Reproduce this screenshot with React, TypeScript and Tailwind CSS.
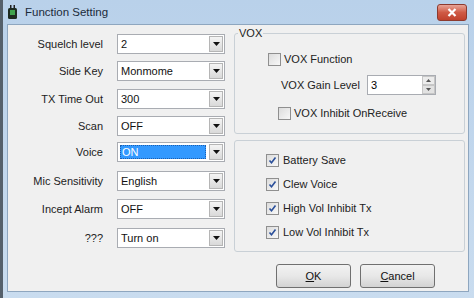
import React from "react";

const FONT = { fontFamily: '"Liberation Sans", Arial, sans-serif' };

const ROWS: { label: string; value: string; mt: string; selected?: boolean }[] = [
  { label: "Squelch level", value: "2", mt: "mt-0" },
  { label: "Side Key", value: "Monmome", mt: "mt-[7px]" },
  { label: "TX Time Out", value: "300", mt: "mt-[8px]" },
  { label: "Scan", value: "OFF", mt: "mt-[7px]" },
  { label: "Voice", value: "ON", mt: "mt-[6px]", selected: true },
  { label: "Mic Sensitivity", value: "English", mt: "mt-[9px]" },
  { label: "Incept Alarm", value: "OFF", mt: "mt-[8px]" },
  { label: "???", value: "Turn on", mt: "mt-[9px]" },
];

function Combo({ value, selected }: { value: string; selected?: boolean }) {
  return (
    <div className="flex h-[20px] w-[108px] items-stretch border border-[#a9acb2] bg-white">
      <div className="flex flex-1 items-center p-[2px]">
        {selected ? (
          <div className="flex h-full w-full items-center border border-dotted border-[#1d5fb0] bg-[#3399ff] pl-[1px] text-white">
            {value}
          </div>
        ) : (
          <span className="pl-[1px] text-[#111]">{value}</span>
        )}
      </div>
      <div className="m-[1px] flex w-[14px] items-center justify-center border border-[#b5b5b5] bg-gradient-to-b from-[#f4f4f4] to-[#d9d9d9]">
        <svg width="7" height="4" viewBox="0 0 7 4">
          <path d="M0 0h7L3.5 4z" fill="#111" />
        </svg>
      </div>
    </div>
  );
}

function Check({ checked }: { checked?: boolean }) {
  return (
    <div className="flex h-[13px] w-[13px] shrink-0 items-center justify-center border border-[#8f8f8f] bg-gradient-to-br from-[#dcdcdc] to-[#f8f8f8]">
      {checked && (
        <svg width="9" height="9" viewBox="0 0 9 9">
          <path d="M1.5 4.5l2 2.3L7.5 1.5" stroke="#2a4f9a" strokeWidth="1.6" fill="none" />
        </svg>
      )}
    </div>
  );
}

function Button({ children }: { children: React.ReactNode }) {
  return (
    <button className="flex h-[24px] w-[75px] items-center justify-center rounded-[3px] border border-[#707070] bg-gradient-to-b from-[#f2f2f2] via-[#e8e8e8] to-[#d3d3d3] text-[#111]">
      {children}
    </button>
  );
}

export default function App() {
  return (
    <div
      className="flex h-[298px] w-[474px] flex-col overflow-hidden border-l-[3px] border-[#55606b] bg-gradient-to-b from-[#b9d1ea] to-[#c9dcef] text-[11px] leading-[14px]"
      style={FONT}
    >
      {/* title bar */}
      <div className="flex h-[24px] shrink-0 items-center pl-[5px] pr-[7px]">
        <svg width="9" height="14" viewBox="0 0 9 14" className="mr-[8px]">
          <rect x="2" y="0" width="1.5" height="3" fill="#222" />
          <rect x="5.5" y="0" width="1.5" height="3" fill="#222" />
          <rect x="0" y="3" width="9" height="11" rx="1.5" fill="#1d2b20" />
          <rect x="2" y="5" width="5" height="5" fill="#3fa34d" />
        </svg>
        <span className="text-[11.5px] text-[#1b2a3a]">Function Setting</span>
        <div className="ml-auto flex h-[17px] w-[30px] items-center justify-center rounded-[3px] border border-[#8d3a2e] bg-gradient-to-b from-[#e7a396] via-[#cf5a45] to-[#c0412c]">
          <svg width="10" height="9" viewBox="0 0 10 9">
            <path d="M1.5 1l7 7M8.5 1l-7 7" stroke="#fff" strokeWidth="2.2" />
          </svg>
        </div>
      </div>

      {/* client */}
      <div className="ml-[4px] mr-[5px] flex h-[268px] shrink-0 border border-[#8ea6bf] bg-[#f0f0f0]">
        <div className="flex w-[226px] shrink-0 flex-col pt-[9px]">
          {ROWS.map((r) => (
            <div key={r.label} className={`flex items-center ${r.mt}`}>
              <div className="w-[96px] pr-[1px] text-right text-[#222]">{r.label}</div>
              <div className="ml-[13px]">
                <Combo value={r.value} selected={r.selected} />
              </div>
            </div>
          ))}
        </div>

        <div className="flex flex-1 flex-col pr-[3px] pt-[2px]">
          <fieldset className="h-[107px] rounded-[3px] border border-[#c9d0d6] px-0">
            <legend className="ml-[3px] px-[1px] leading-[13px] text-[#222]">VOX</legend>
            <div className="ml-[33px] mt-[12px] flex items-center gap-[3px]">
              <Check />
              <span className="text-[#222]">VOX Function</span>
            </div>
            <div className="ml-[46px] mt-[9px] flex items-center">
              <span className="text-[#222]">VOX Gain Level</span>
              <div className="ml-[7px] flex h-[20px] w-[69px] border border-[#a9acb2] bg-white">
                <span className="flex-1 pl-[3px] leading-[18px]">3</span>
                <div className="flex w-[13px] flex-col">
                  <div className="flex flex-1 items-center justify-center border border-[#c6c6c6] bg-[#ececec]">
                    <svg width="5" height="3" viewBox="0 0 5 3"><path d="M0 3h5L2.5 0z" fill="#555" /></svg>
                  </div>
                  <div className="flex flex-1 items-center justify-center border border-[#c6c6c6] bg-[#e2e2e2]">
                    <svg width="5" height="3" viewBox="0 0 5 3"><path d="M0 0h5L2.5 3z" fill="#555" /></svg>
                  </div>
                </div>
              </div>
            </div>
            <div className="ml-[43px] mt-[11px] flex items-center gap-[3px]">
              <Check />
              <span className="text-[#222]">VOX Inhibit OnReceive</span>
            </div>
          </fieldset>

          <div className="mt-[6px] flex h-[112px] flex-col gap-[10px] rounded-[3px] border border-[#c9d0d6] pl-[31px] pt-[12px]">
            {["Battery Save", "Clew Voice", "High Vol Inhibit Tx", "Low Vol Inhibit Tx"].map((t) => (
              <div key={t} className="flex items-center gap-[4px]">
                <Check checked />
                <span className="text-[#222]">{t}</span>
              </div>
            ))}
          </div>

          <div className="mt-[12px] flex gap-[9px] pl-[42px]">
            <Button>
              <span className="underline">O</span>K
            </Button>
            <Button>
              <span className="underline">C</span>ancel
            </Button>
          </div>
        </div>
      </div>
    </div>
  );
}
